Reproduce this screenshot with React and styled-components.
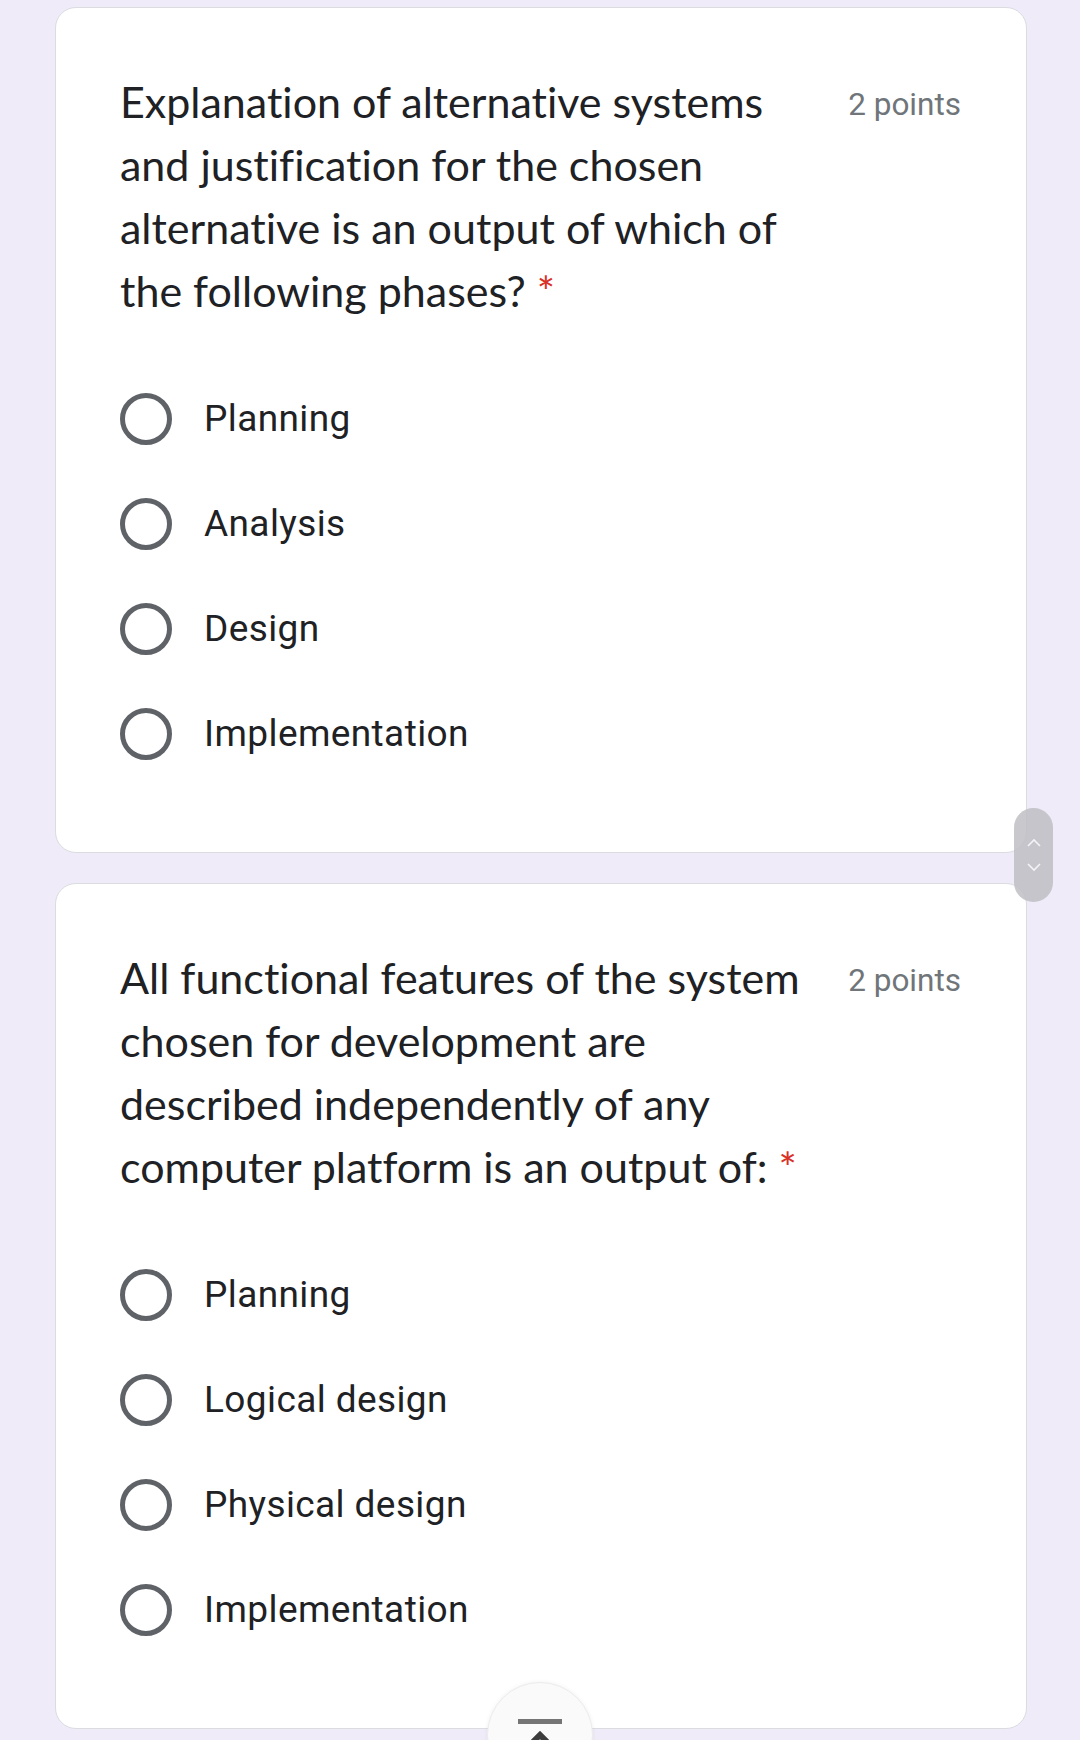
import styled, { createGlobalStyle } from "styled-components";

const GlobalStyle = createGlobalStyle`
  html, body {
    margin: 0;
    padding: 0;
    background-color: #efebf8;
  }
  body {
    font-family: "Roboto", "Liberation Sans", sans-serif;
    color: #202124;
  }
`;

const Page = styled.main`
  position: relative;
  min-height: 1740px;
  box-sizing: border-box;
  padding: 7px 53px 13px 55px;
  display: flex;
  flex-direction: column;
  gap: 30px;
  overflow: hidden;
`;

const Card = styled.section`
  background-color: #fff;
  border: 1px solid #dadce0;
  border-radius: 21px;
  padding: 62px 65px 66px 64px;
`;

const QuestionHead = styled.div`
  display: flex;
  justify-content: space-between;
  align-items: flex-start;
  margin-bottom: 44px;
`;

const Title = styled.div`
  font-family: "Lato", "Liberation Sans", sans-serif;
  font-size: 43px;
  line-height: 63px;
  font-variant-ligatures: none;
  color: #202124;
`;

const Required = styled.span`
  color: #d93025;
  margin-left: 11px;
`;

const Points = styled.div`
  font-family: "Roboto", "Liberation Sans", sans-serif;
  font-size: 31.5px;
  line-height: 63px;
  color: #70757a;
  white-space: nowrap;
  margin-top: 3px;
`;

const Options = styled.div`
  display: flex;
  flex-direction: column;
`;

const Option = styled.label`
  display: flex;
  align-items: center;
  height: 105px;
  gap: 32px;
  cursor: pointer;
`;

const Radio = styled.span`
  width: 52px;
  height: 52px;
  box-sizing: border-box;
  border: 5px solid #5f6368;
  border-radius: 50%;
  flex-shrink: 0;
`;

const OptionText = styled.span`
  font-family: "Roboto", "Liberation Sans", sans-serif;
  font-size: 37px;
  letter-spacing: 0.4px;
  color: #202124;
`;

const ScrollPill = styled.div`
  position: absolute;
  left: 1014px;
  top: 808px;
  width: 39px;
  height: 94px;
  border-radius: 20px;
  background-color: rgba(190, 190, 196, 0.85);
  display: flex;
  flex-direction: column;
  align-items: center;
  justify-content: center;
  gap: 16px;
`;

const TopButton = styled.button`
  position: absolute;
  left: 487px;
  top: 1682px;
  width: 106px;
  height: 106px;
  border-radius: 50%;
  border: 1px solid #ececec;
  background-color: #fafafa;
  box-shadow: 0 0 4px rgba(0, 0, 0, 0.06);
  display: flex;
  flex-direction: column;
  align-items: center;
  justify-content: flex-start;
  padding: 36px 0 0;
  box-sizing: border-box;
`;

const questions = [
  {
    lines: [
      "Explanation of alternative systems",
      "and justification for the chosen",
      "alternative is an output of which of",
      "the following phases?",
    ],
    options: ["Planning", "Analysis", "Design", "Implementation"],
  },
  {
    lines: [
      "All functional features of the system",
      "chosen for development are",
      "described independently of any",
      "computer platform is an output of:",
    ],
    options: ["Planning", "Logical design", "Physical design", "Implementation"],
  },
];

const Chevron = ({ up }) => (
  <svg width="14" height="9" viewBox="0 0 14 9">
    <path
      d={up ? "M1 8 L7 2 L13 8" : "M1 1 L7 7 L13 1"}
      fill="none"
      stroke="#f4f4f6"
      strokeWidth="1.6"
    />
  </svg>
);

const App = () => {
  return (
    <>
      <GlobalStyle />
      <Page>
        {questions.map((q, qi) => (
          <Card key={qi}>
            <QuestionHead>
              <Title>
                {q.lines.map((line, i) => (
                  <div key={i}>
                    {line}
                    {i === q.lines.length - 1 && <Required>*</Required>}
                  </div>
                ))}
              </Title>
              <Points>2 points</Points>
            </QuestionHead>
            <Options>
              {q.options.map((opt) => (
                <Option key={opt}>
                  <Radio />
                  <OptionText>{opt}</OptionText>
                </Option>
              ))}
            </Options>
          </Card>
        ))}
        <ScrollPill>
          <Chevron up />
          <Chevron />
        </ScrollPill>
        <TopButton aria-label="Back to top">
          <svg width="46" height="40" viewBox="0 0 46 40">
            <rect x="1" y="0" width="44" height="5" fill="#757575" />
            <path d="M9 30 L23 16 L37 30" fill="none" stroke="#3c3c3c" strokeWidth="6" />
          </svg>
        </TopButton>
      </Page>
    </>
  );
};

export default App;
